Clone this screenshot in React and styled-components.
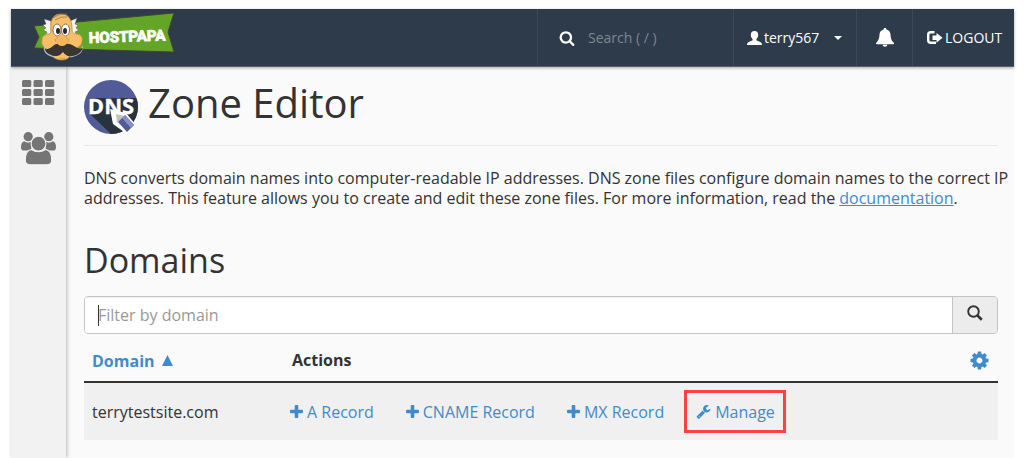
import React from "react";
import styled, { createGlobalStyle } from "styled-components";

const GlobalStyle = createGlobalStyle`
  * {
    box-sizing: border-box;
  }

  body {
    margin: 0;
    background: #fff;
    color: #333;
    font-family: "Open Sans", "Noto Sans", sans-serif;
    font-size: 16px;
    line-height: 20px;
  }

  input,
  button {
    font: inherit;
  }
`;

const Page = styled.div`
  display: flex;
  flex-direction: column;
  min-height: 100vh;
  padding: 9px 10px 0 11px;
`;

const Header = styled.header`
  display: flex;
  height: 58px;
  background: #2d3b4b;
  border-bottom: 1px solid #56606f;
  box-shadow: 0 1px 3px #0005;
  color: #fff;
  font-size: 14px;
  z-index: 2;
`;

const Brand = styled.a`
  margin-right: auto;
  padding-left: 22px;

  svg {
    display: block;
  }
`;

const HeaderItem = styled.div`
  display: flex;
  align-items: center;
  justify-content: ${({ center }) => (center ? "center" : "flex-start")};
  width: ${({ width }) => width}px;
  padding: 0 ${({ pad }) => pad || 0}px;
  border-left: 1px solid #394958;
`;

const HeaderSearch = styled.input`
  width: 120px;
  margin-left: 13px;
  padding: 0;
  background: transparent;
  border: none;
  color: #fff;
  outline: none;

  &::placeholder {
    color: #7f8790;
    opacity: 1;
  }
`;

const HeaderButton = styled.button`
  display: flex;
  align-items: center;
  gap: 2px;
  padding: 0;
  background: transparent;
  border: none;
  color: #fff;
  cursor: pointer;
`;

const HeaderLink = styled.a`
  display: flex;
  align-items: center;
  gap: 2px;
  color: #fff;
  text-decoration: none;
`;

const CaretDown = styled.span`
  margin-left: 13px;
  border: 4px solid transparent;
  border-top-color: #fff;
  border-bottom: none;
`;

const Body = styled.div`
  display: flex;
  flex: 1;
`;

const Sidebar = styled.nav`
  display: flex;
  flex-direction: column;
  align-items: center;
  gap: 26px;
  width: 55px;
  padding-top: 13px;
  background: #f2f2f2;
  box-shadow: 1px 0 4px #0004;
  z-index: 1;

  svg {
    display: block;
  }
`;

const Main = styled.main`
  flex: 1;
  padding: 12px 16px 18px 18px;
  background: #fafafa;
`;

const TitleRow = styled.div`
  display: flex;
  align-items: center;
  gap: 10px;
  height: 67px;
  padding-bottom: 11px;
  border-bottom: 1px solid #e9e9e9;
`;

const Title = styled.h1`
  margin: 0;
  padding-bottom: 7px;
  font-size: 40px;
  font-weight: 400;
  line-height: 48px;
`;

const Intro = styled.p`
  margin: 22px -16px 0 0;
`;

const DocLink = styled.a`
  color: #428bca;
`;

const SectionTitle = styled.h2`
  margin: 32px 0 16px;
  font-size: 34px;
  font-weight: 400;
  line-height: 40px;
`;

const FilterGroup = styled.form`
  display: flex;
  position: relative;
  height: 38px;
  border: 1px solid #c4c4c4;
  border-radius: 4px;
  overflow: hidden;
`;

const FilterInput = styled.input`
  flex: 1;
  padding: 0 13px;
  background: #fff;
  border: none;
  box-shadow: inset 0 1px 1px #0001;
  outline: none;

  &::placeholder {
    color: #999;
    opacity: 1;
  }
`;

const TextCursor = styled.span`
  position: absolute;
  left: 13px;
  top: 8px;
  width: 1px;
  height: 21px;
  background: #333;
`;

const FilterButton = styled.button`
  width: 45px;
  padding: 0;
  background: #ececec;
  border: none;
  border-left: 1px solid #c4c4c4;
  color: #333;
  cursor: pointer;
`;

const Table = styled.table`
  width: 100%;
  border-collapse: separate;
  border-spacing: 0;
  table-layout: fixed;
  margin-top: 7px;
`;

const HeadCell = styled.th`
  width: ${({ width }) => (width ? `${width}px` : "auto")};
  height: 42px;
  padding: 0 8px 2px;
  border-bottom: 2px solid #333;
  text-align: ${({ align }) => align || "left"};
`;

const SortButton = styled.button`
  display: inline-flex;
  align-items: center;
  gap: 7px;
  padding: 0;
  background: transparent;
  border: none;
  color: #428bca;
  cursor: pointer;
  vertical-align: middle;
`;

const Cell = styled.td`
  padding: 7px 8px;
  background: #f0f0f0;
`;

const Actions = styled.div`
  display: flex;
  gap: 9px;
  margin-left: -14px;
`;

const ActionLink = styled.a`
  display: flex;
  align-items: center;
  gap: 4px;
  height: 43px;
  padding: 0 8px 0 9px;
  border: 3px solid ${({ marked }) => (marked ? "#fb4141" : "transparent")};
  color: #428bca;
  text-decoration: none;
  white-space: nowrap;
`;

const paths = {
  search:
    "M1216 832q0-185-131.5-316.5t-316.5-131.5-316.5 131.5-131.5 316.5 131.5 316.5 316.5 131.5 316.5-131.5 131.5-316.5zm512 832q0 52-38 90t-90 38q-54 0-90-38l-343-342q-179 124-399 124-143 0-273.5-55.5t-225-150-150-225-55.5-273.5 55.5-273.5 150-225 225-150 273.5-55.5 273.5 55.5 225 150 150 225 55.5 273.5q0 220-124 399l343 343q37 37 37 90z",
  cog: "M1152 896q0-106-75-181t-181-75-181 75-75 181 75 181 181 75 181-75 75-181zm512-109v222q0 12-8 23t-20 13l-185 28q-19 54-39 91 35 50 107 138 10 12 10 25t-9 23q-27 37-99 108t-94 71q-12 0-26-9l-138-108q-44 23-91 38-16 136-29 186-7 28-36 28h-222q-14 0-24.5-8.5t-11.5-21.5l-28-184q-49-16-90-37l-141 107q-10 9-25 9-14 0-25-11-126-114-165-168-7-10-7-23 0-12 8-23 15-21 51-66.5t54-70.5q-27-50-41-99l-183-27q-13-2-21-12.5t-8-23.5v-222q0-12 8-23t19-13l186-28q14-46 39-92-40-57-107-138-10-12-10-24 0-10 9-23 26-36 98.5-107.5t94.5-71.5q13 0 26 10l138 107q44-23 91-38 16-136 29-186 7-28 36-28h222q14 0 24.5 8.5t11.5 21.5l28 184q49 16 90 37l142-107q9-9 24-9 13 0 25 10 129 119 165 170 7 8 7 22 0 12-8 23-15 21-51 66.5t-54 70.5q26 50 41 98l183 28q13 2 21 12.5t8 23.5z",
  wrench:
    "M448 1472q0-26-19-45t-45-19-45 19-19 45 19 45 45 19 45-19 19-45zm644-420l-682 682q-37 37-90 37-52 0-91-37l-106-108q-38-36-38-90 0-53 38-91l681-681q39 98 114.5 173.5t173.5 114.5zm634-435q0 39-23 106-47 134-164.5 217.5t-258.5 83.5q-185 0-316.5-131.5t-131.5-316.5 131.5-316.5 316.5-131.5q58 0 121.5 16.5t107.5 46.5q16 11 16 28t-16 28l-293 169v224l193 107q5-3 79-48.5t135.5-81 70.5-35.5q15 0 23.5 10t8.5 25z",
};

const Icon = ({ name, size }) => (
  <svg width={size} height={size} viewBox="0 0 1792 1792" fill="currentColor" aria-hidden="true">
    <path d={paths[name]} />
  </svg>
);

const ThinSearchIcon = () => (
  <svg width="16" height="16" viewBox="0 0 16 16" fill="none" stroke="currentColor" aria-hidden="true">
    <circle cx="6.5" cy="6.5" r="5.3" strokeWidth="1.9" />
    <path d="M10.4 10.4l4.4 4.4" strokeWidth="2.7" />
  </svg>
);

const PlusIcon = () => (
  <svg width="13" height="13" viewBox="0 0 13 13" fill="currentColor" aria-hidden="true">
    <path d="M5.7 0h1.6q1 0 1 1v3.8H12q1 0 1 1v1.5q0 1-1 1H8.3V12q0 1-1 1H5.7q-1 0-1-1V8.3H1q-1 0-1-1V5.8q0-1 1-1h3.7V1q0-1 1-1z" />
  </svg>
);

const UserIcon = () => (
  <svg width="15" height="14" viewBox="0 0 15 14" fill="currentColor" aria-hidden="true">
    <path d="M7.5 0C9.9 0 11.2 1.4 11.2 3.8c0 2-.7 3.4-1.8 4.5v1c.5.6 4 1.500 4.900 2.400.5.5.7 1.300.7 2.300H0c0-1 .2-1.800.7-2.300.9-.9 4.400-1.800 4.900-2.400v-1C4.500 7.200 3.800 5.800 3.800 3.800 3.800 1.400 5.100 0 7.500 0z" />
  </svg>
);

const BellIcon = () => (
  <svg width="18" height="19" viewBox="0 0 18 19" fill="#fff" aria-hidden="true">
    <path d="M9 0c.9 0 1.400.6 1.400 1.500C13 2.200 14.300 4 14.500 6.500c.3 4.200.9 5.900 3.200 8.200.6.700.3 1.500-.6 1.500H.9c-.9 0-1.200-.8-.6-1.500 2.300-2.300 2.900-4 3.200-8.200C3.700 4 5 2.200 7.600 1.500 7.600.6 8.100 0 9 0zM6.600 16.800h4.800c-.2 1.300-1 2-2.400 2s-2.200-.7-2.400-2z" />
  </svg>
);

const LogoutIcon = () => (
  <svg width="16" height="14" viewBox="0 0 16 14" aria-hidden="true">
    <path d="M7.500 1.200H3.700Q1.200 1.200 1.200 3.700v5.600q0 2.500 2.500 2.500H9" fill="none" stroke="#fff" strokeWidth="2.400" />
    <path d="M5.500 4.600H9.500V1.900l6 4.900-6 4.900V8.900h-4z" fill="#fff" />
  </svg>
);

const GridIcon = () => (
  <svg width="33" height="26" viewBox="0 0 33 26" fill="#757575" aria-hidden="true">
    {[0, 9, 18].map((y) =>
      [0, 11.5, 23].map((x) => <rect key={`${x}-${y}`} x={x} y={y} width="9.300" height="7" rx="1.500" />)
    )}
  </svg>
);

const UsersIcon = () => (
  <svg width="35" height="33" viewBox="0 0 34 32" fill="#757575" aria-hidden="true">
    <circle cx="7" cy="4.500" r="4.500" />
    <circle cx="27" cy="4.500" r="4.500" />
    <path d="M3 9q4 2.500 7 .3V17l-2 1H3q-3 0-3-3 0-5 3-6zM31 9q-4 2.500-7 .3V17l2 1h5q3 0 3-3 0-5-3-6z" />
    <g stroke="#f2f2f2" strokeWidth="1">
      <path d="M10 17q7 4.500 14 0 5.800 1 5.800 10.500 0 4.300-5 4.300H9.200q-5 0-5-4.300Q4.200 18 10 17z" />
      <circle cx="17" cy="11.300" r="7.200" />
    </g>
  </svg>
);

const DnsIcon = () => (
  <svg width="54" height="54" viewBox="0 0 54 54" role="img" aria-label="DNS">
    <defs>
      <clipPath id="dns-disc">
        <circle cx="27" cy="27" r="27" />
      </clipPath>
    </defs>
    <g clipPath="url(#dns-disc)">
      <rect width="54" height="54" fill="#515b97" />
      <path d="M5 18h49v36H27L5 33z" fill="#28333e" />
    </g>
    <text
      x="27"
      y="34"
      textAnchor="middle"
      fill="#fff"
      stroke="#fff"
      strokeWidth=".4"
      fontFamily="Open Sans, sans-serif"
      fontWeight="700"
      fontSize="22"
    >
      DNS
    </text>
    <path d="M26 29l16 4 10 12-9 9-14-10z" fill="#fff" />
    <path d="M32 34l1 9 7-7z" fill="#c2c3c2" />
    <path d="M34 42l7-7 9 10-7 7z" fill="#515b97" />
    <path d="M38 38l3-3 9 10-3 3z" fill="#8791c5" />
  </svg>
);

const Logo = () => (
  <svg width="144" height="54" viewBox="0 0 144 54" role="img" aria-label="HostPapa">
    <path d="M1 17L141 4l-6 19 6 20-140-4 5-11z" fill="#63a527" stroke="#45462e" strokeWidth="1" />
    <text
      x="56"
      y="34"
      transform="rotate(-2 56 34)"
      fill="#fff"
      stroke="#fff"
      strokeWidth=".9"
      fontFamily="Roboto, sans-serif"
      fontWeight="700"
      fontSize="15"
    >
      HOSTPAPA
    </text>
    <path
      d="M18 12l-7-2 2 5-3 1 3 3-3 2 4 2-2 4 6 1zM37 12l7-3-2 6 3 1-2 3 3 2-4 2 3 4-8 1z"
      fill="#f5f3ec"
      stroke="#555"
      strokeWidth=".5"
    />
    <path
      d="M28 5c8 0 11 6 11 15 0 3 1 5 4 5 5 0 7 3 6 8-1 5-5 5-8 8-3 6-6 10-12 10-7 0-11-4-14-10-4-2-7-5-6-10 0-4 3-6 7-6 2 0 2-2 2-4C17 11 20 5 28 5z"
      fill="#f7bd67"
      stroke="#c08b47"
      strokeWidth=".8"
    />
    <path d="M20 9q6-5 14-4M22 11q6-4 12-3" fill="none" stroke="#8a755c" strokeWidth=".8" />
    <ellipse cx="24" cy="21" rx="4" ry="6" fill="#fff" stroke="#685944" strokeWidth=".8" />
    <ellipse cx="32.500" cy="21" rx="4" ry="6" fill="#fff" stroke="#685944" strokeWidth=".8" />
    <ellipse cx="25" cy="22" rx="2" ry="3" fill="#292929" />
    <ellipse cx="32" cy="22" rx="2" ry="3" fill="#292929" />
    <path d="M12 37q-3 8 10 11M49 37q2 8-12 11" fill="none" stroke="#b7bcc0" strokeWidth="1.200" />
    <path
      d="M29 36q-5-3-9 1-4 4-8 3 5 8 12 7 4-1 6-4 3 5 9 4 8-1 11-8-4 2-9-2-6-4-12-1z"
      fill="#393531"
    />
    <ellipse cx="29" cy="31.500" rx="5.500" ry="5.500" fill="#f5b55c" />
    <path d="M23 33q-2-4 2-4M35 33q2-4-2-4M27 49q3 2 5 0" fill="none" stroke="#ca8f46" strokeWidth=".8" />
  </svg>
);

export default function App() {
  const records = ["A Record", "CNAME Record", "MX Record"];

  return (
    <>
      <GlobalStyle />
      <Page>
        <Header>
          <Brand href="#home">
            <Logo />
          </Brand>
          <HeaderItem width={196} pad={21}>
            <Icon name="search" size={16} />
            <HeaderSearch type="text" placeholder="Search ( / )" aria-label="Search" />
          </HeaderItem>
          <HeaderItem width={123} pad={13}>
            <HeaderButton type="button">
              <UserIcon />
              terry567
              <CaretDown />
            </HeaderButton>
          </HeaderItem>
          <HeaderItem width={56} center>
            <HeaderButton type="button" aria-label="Notifications">
              <BellIcon />
            </HeaderButton>
          </HeaderItem>
          <HeaderItem width={102} pad={14}>
            <HeaderLink href="#logout">
              <LogoutIcon />
              LOGOUT
            </HeaderLink>
          </HeaderItem>
        </Header>

        <Body>
          <Sidebar>
            <a href="#tools" aria-label="Tools">
              <GridIcon />
            </a>
            <a href="#users" aria-label="User manager">
              <UsersIcon />
            </a>
          </Sidebar>

          <Main>
            <TitleRow>
              <DnsIcon />
              <Title>Zone Editor</Title>
            </TitleRow>
            <Intro>
              DNS converts domain names into computer-readable IP addresses. DNS zone files configure
              domain names to the correct IP addresses. This feature allows you to create and edit these
              zone files. For more information, read the <DocLink href="#documentation">documentation</DocLink>.
            </Intro>

            <SectionTitle>Domains</SectionTitle>
            <FilterGroup onSubmit={(e) => e.preventDefault()}>
              <FilterInput type="text" placeholder="Filter by domain" aria-label="Filter by domain" />
              <TextCursor />
              <FilterButton type="submit" aria-label="Search domains">
                <ThinSearchIcon />
              </FilterButton>
            </FilterGroup>

            <Table>
              <thead>
                <tr>
                  <HeadCell width={200}>
                    <SortButton type="button">
                      Domain
                      <svg width="11" height="11" viewBox="0 0 11 11" fill="currentColor" aria-hidden="true">
                        <path d="M5.500 0L11 11H0z" />
                      </svg>
                    </SortButton>
                  </HeadCell>
                  <HeadCell>Actions</HeadCell>
                  <HeadCell width={60} align="right">
                    <SortButton type="button" aria-label="Table settings">
                      <Icon name="cog" size={21} />
                    </SortButton>
                  </HeadCell>
                </tr>
              </thead>
              <tbody>
                <tr>
                  <Cell>terrytestsite.com</Cell>
                  <Cell colSpan={2}>
                    <Actions>
                      {records.map((record) => (
                        <ActionLink key={record} href="#add-record">
                          <PlusIcon />
                          {record}
                        </ActionLink>
                      ))}
                      <ActionLink href="#manage" marked="true">
                        <Icon name="wrench" size={15} />
                        Manage
                      </ActionLink>
                    </Actions>
                  </Cell>
                </tr>
              </tbody>
            </Table>
          </Main>
        </Body>
      </Page>
    </>
  );
}
